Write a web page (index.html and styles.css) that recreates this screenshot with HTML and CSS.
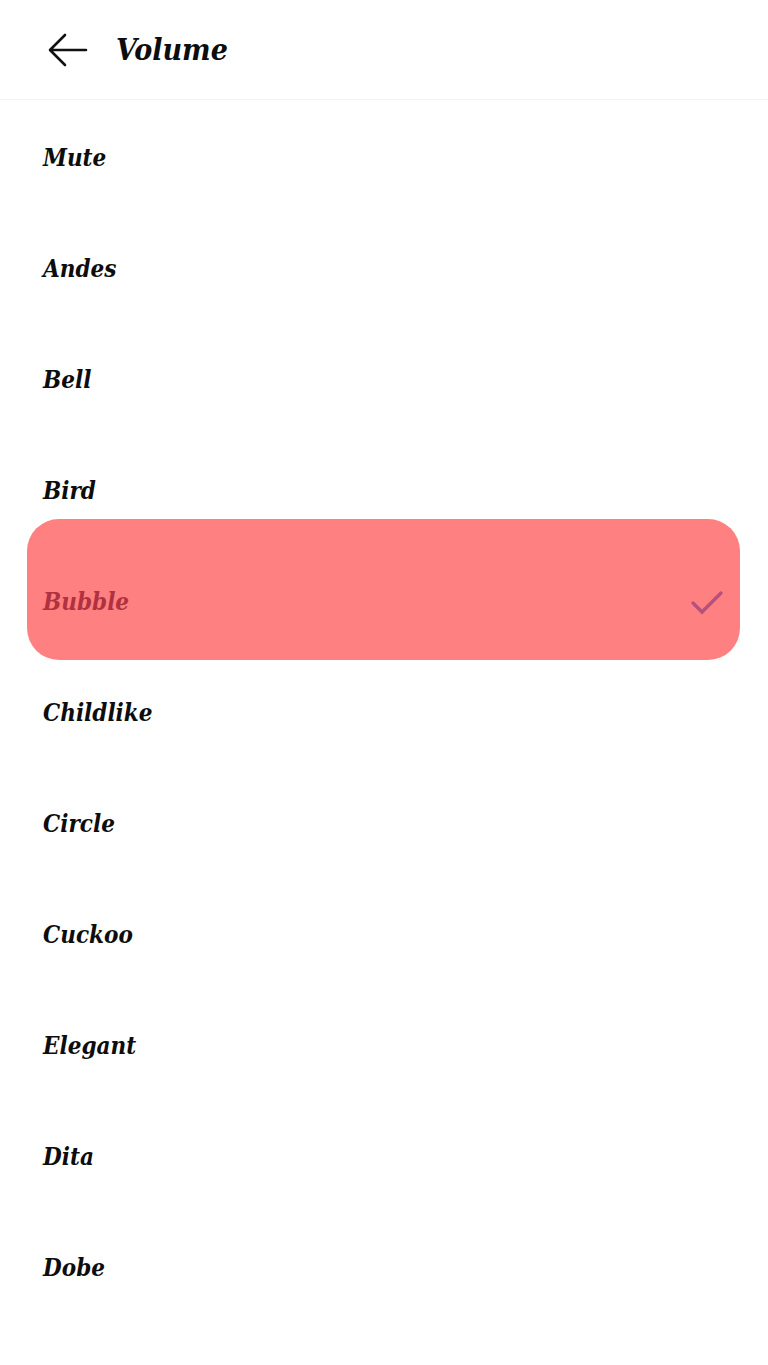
FILE: index.html
```html
<!DOCTYPE html>
<html>
<head>
<meta charset="utf-8">
<link rel="stylesheet" href="styles.css">
</head>
<body>
<div class="page">
  <header class="header">
    <span class="back">
      <svg width="40" height="36" viewBox="0 0 40 36"><path d="M38 17 H3 M17 2 L2 17 L17 32" fill="none" stroke="#111" stroke-width="2.6" stroke-linecap="round" stroke-linejoin="round"/></svg>
    </span>
    <h1 class="title">Volume</h1>
  </header>
  <ul class="list">
    <li class="item">Mute</li>
    <li class="item">Andes</li>
    <li class="item">Bell</li>
    <li class="item">Bird</li>
    <li class="item selected"><span class="sel-bg"></span><span class="label">Bubble</span>
      <svg class="check" width="36" height="28" viewBox="0 0 36 28"><path d="M3 13 L12 22 L31 3" fill="none" stroke="#b5517c" stroke-width="3.4" stroke-linecap="round" stroke-linejoin="miter"/></svg>
    </li>
    <li class="item">Childlike</li>
    <li class="item">Circle</li>
    <li class="item">Cuckoo</li>
    <li class="item">Elegant</li>
    <li class="item">Dita</li>
    <li class="item">Dobe</li>
  </ul>
</div>
</body>
</html>
```
FILE: styles.css
```css
html, body { margin: 0; padding: 0; background: #ffffff; }
.page {
  width: 768px;
  height: 1365px;
  overflow: hidden;
  font-family: "DejaVu Serif", "Liberation Serif", serif;
  font-stretch: condensed;
  font-style: italic;
  font-weight: bold;
  color: #0d0d0d;
}
.header {
  height: 100px;
  display: flex;
  align-items: center;
  border-bottom: 1px solid #f2f2f2;
  box-sizing: border-box;
  padding-left: 48px;
}
.back { display: flex; width: 40px; height: 36px; margin-top: 2px; }
.title {
  margin: 0 0 0 28px;
  font-size: 30px;
  font-weight: bold;
  line-height: 1;
}
.list { list-style: none; margin: 0; padding: 0; }
.item {
  height: 111px;
  box-sizing: border-box;
  padding-top: 4px;
  display: flex;
  align-items: center;
  padding-left: 43px;
  padding-right: 44px;
  font-size: 24px;
  position: relative;
  isolation: isolate;
}
.selected { color: #b0323e; }
.sel-bg {
  position: absolute;
  left: 27px;
  right: 28px;
  top: -25px;
  bottom: -5px;
  background: #ff8080;
  border-radius: 32px;
  z-index: -1;
}
.label { flex: 1; }
.check { display: block; margin-top: 4px; margin-right: -2px; }
```
